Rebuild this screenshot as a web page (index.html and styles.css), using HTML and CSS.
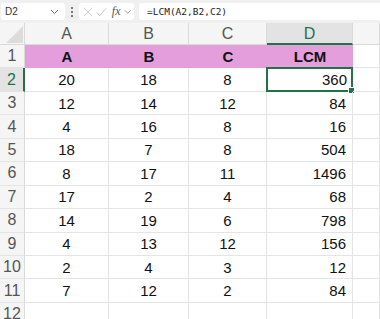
FILE: index.html
```html
<!DOCTYPE html>
<html lang="en">
<head>
    <meta charset="UTF-8">
    <meta name="viewport" content="width=device-width, initial-scale=1.0">
    <title>LCM sheet</title>
    <link rel="stylesheet" href="styles.css">
</head>
<body>
    <div class="toolbar">
        <div class="name-box">
            <span>D2</span>
            <svg class="chev" width="9" height="6" viewBox="0 0 9 6"><path d="M1 1l3.5 3.5L8 1" fill="none" stroke="#666" stroke-width="1"/></svg>
        </div>
        <div class="dots"><i></i><i></i><i></i></div>
        <div class="fx-box">
            <svg width="12" height="12" viewBox="0 0 12 12"><path d="M1 1l10 10M11 1L1 11" stroke="#c4c4c4" stroke-width="1" fill="none"/></svg>
            <svg width="13" height="12" viewBox="0 0 13 12"><path d="M1 6.5l3.5 4L12 1.5" stroke="#c4c4c4" stroke-width="1" fill="none"/></svg>
            <span class="fx">fx</span>
            <svg class="chev" width="9" height="6" viewBox="0 0 9 6"><path d="M1 1l3.5 3.5L8 1" fill="none" stroke="#888" stroke-width="1"/></svg>
        </div>
        <div class="formula">=LCM(A2,B2,C2)</div>
    </div>

    <div class="sheet">
        <div class="corner"><svg width="22" height="20" viewBox="0 0 22 20"><path d="M21 2V19H4Z" fill="#dcdcdc"/></svg></div>
        <div class="col-head">A</div>
        <div class="col-head">B</div>
        <div class="col-head">C</div>
        <div class="col-head active">D</div>
        <div class="col-head"></div>

        <div class="row-head">1</div>
        <div class="cell title">A</div>
        <div class="cell title">B</div>
        <div class="cell title">C</div>
        <div class="cell title">LCM</div>
        <div class="cell"></div>

        <div class="row-head active">2</div>
        <div class="cell">20</div>
        <div class="cell">18</div>
        <div class="cell">8</div>
        <div class="cell num selected">360<span class="handle"></span></div>
        <div class="cell"></div>

        <div class="row-head">3</div>
        <div class="cell">12</div><div class="cell">14</div><div class="cell">12</div><div class="cell num">84</div><div class="cell"></div>
        <div class="row-head">4</div>
        <div class="cell">4</div><div class="cell">16</div><div class="cell">8</div><div class="cell num">16</div><div class="cell"></div>
        <div class="row-head">5</div>
        <div class="cell">18</div><div class="cell">7</div><div class="cell">8</div><div class="cell num">504</div><div class="cell"></div>
        <div class="row-head">6</div>
        <div class="cell">8</div><div class="cell">17</div><div class="cell">11</div><div class="cell num">1496</div><div class="cell"></div>
        <div class="row-head">7</div>
        <div class="cell">17</div><div class="cell">2</div><div class="cell">4</div><div class="cell num">68</div><div class="cell"></div>
        <div class="row-head">8</div>
        <div class="cell">14</div><div class="cell">19</div><div class="cell">6</div><div class="cell num">798</div><div class="cell"></div>
        <div class="row-head">9</div>
        <div class="cell">4</div><div class="cell">13</div><div class="cell">12</div><div class="cell num">156</div><div class="cell"></div>
        <div class="row-head">10</div>
        <div class="cell">2</div><div class="cell">4</div><div class="cell">3</div><div class="cell num">12</div><div class="cell"></div>
        <div class="row-head">11</div>
        <div class="cell">7</div><div class="cell">12</div><div class="cell">2</div><div class="cell num">84</div><div class="cell"></div>
        <div class="row-head">12</div>
        <div class="cell"></div><div class="cell"></div><div class="cell"></div><div class="cell"></div><div class="cell"></div>
    </div>
</body>
</html>
```

FILE: styles.css
```css
/* sheet look */
body {
    margin: 0;
    width: 380px;
    height: 319px;
    overflow: hidden;
    background: #fff;
    font-family: "Liberation Sans", Arial, sans-serif;
}
.toolbar {
    display: flex;
    align-items: center;
    height: 23px;
    padding: 0 0 0 1px;
    background: #f0f0f0;
    box-sizing: border-box;
}
.name-box, .fx-box, .formula {
    display: flex;
    align-items: center;
    height: 17px;
    background: #fff;
    border-radius: 3px;
    box-sizing: border-box;
}
.name-box {
    width: 64px;
    padding: 0 6px 0 4px;
    justify-content: space-between;
    font-size: 10px;
    color: #333;
}
.dots {
    display: flex;
    flex-direction: column;
    gap: 2px;
    margin: 0 6px 0 6px;
}
.dots i {
    width: 2px;
    height: 2px;
    background: #777;
}
.fx-box {
    width: 55px;
    padding: 0 3px 0 4px;
    gap: 3px;
}
.fx {
    font-family: "Liberation Serif", serif;
    font-style: italic;
    font-size: 12px;
    color: #555;
    margin-left: 2px;
}
.formula {
    flex: 1;
    margin-left: 5px;
    padding-left: 8px;
    border-radius: 3px 0 0 3px;
    font-family: "DejaVu Sans Mono", monospace;
    font-size: 9.5px;
    color: #222;
}
.sheet {
    display: grid;
    grid-template-columns: 25px 84px 80px 78px 86px 1fr;
    grid-template-rows: 22px repeat(12, 23.45px);
}
.corner, .col-head, .row-head {
    background: #f5f5f5;
    color: #555;
    font-size: 16px;
    display: flex;
    align-items: center;
    justify-content: center;
    box-sizing: border-box;
}
.corner {
    border-right: 1px solid #dadada;
    border-bottom: 1px solid #dadada;
    align-items: flex-end;
    justify-content: flex-end;
}
.col-head {
    border-right: 1px solid #dadada;
    border-bottom: 1px solid #dadada;
    padding-top: 1px;
}
.col-head.active {
    background: #e3e3e3;
    color: #217346;
    border-bottom: 2px solid #217346;
}
.row-head {
    border-right: 1px solid #dadada;
    border-bottom: 1px solid #e4e4e4;
    font-size: 16px;
}
.row-head.active {
    background: #e3e3e3;
    color: #217346;
    border-right: 2px solid #217346;
}
.cell {
    position: relative;
    display: flex;
    align-items: center;
    justify-content: center;
    font-size: 15px;
    color: #111;
    border-right: 1px solid #e4e4e4;
    border-bottom: 1px solid #e4e4e4;
    box-sizing: border-box;
}
.cell.title {
    background: #e39edb;
    font-weight: bold;
    border-right: none;
    border-bottom: none;
}
.cell.num {
    justify-content: flex-end;
    padding-right: 6px;
}
.cell.selected {
    border: 2px solid #217346;
    padding-right: 4px;
    margin: -1px 0 0 -1px;
}
.handle {
    position: absolute;
    right: -4px;
    bottom: -4px;
    width: 5px;
    height: 5px;
    background: #217346;
    border: 1px solid #fff;
}
```
